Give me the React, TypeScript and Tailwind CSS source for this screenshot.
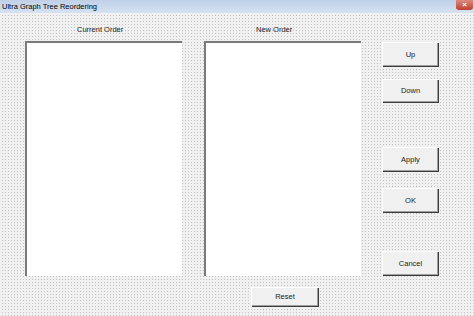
import React from "react";

const font = "font-['Liberation_Sans','Arial',sans-serif]";

function Btn({ label, className = "" }: { label: string; className?: string }) {
  return (
    <div
      className={`flex items-center justify-center bg-[#f0f0f0] text-[7.5px] leading-[10px] text-[#222] shadow-[inset_1px_1px_#ffffff,inset_-1px_-1px_#3c3c3c,inset_-2px_-2px_#a0a0a0] ${className}`}
    >
      {label}
    </div>
  );
}

function ListBox() {
  return <div className="h-[235px] w-[157px] bg-white border-l-2 border-t-2 border-[#7a7a7a]" />;
}

export default function App() {
  return (
    <div className={`w-[474px] h-[316px] flex flex-col overflow-hidden ${font}`}>
      <div className="h-[13px] flex items-start justify-between bg-gradient-to-b from-[#bfd0e8] to-[#d6e2f1]">
        <span className="pl-[2px] pt-[1px] text-[7.5px] leading-[11px] text-black">Ultra Graph Tree Reordering</span>
        <div className="w-[17px] h-[10px] mr-[1px] rounded-b-[3px] bg-gradient-to-b from-[#d98a80] to-[#c13d30] flex items-center justify-center text-white text-[8px] leading-[8px] font-bold">
          ×
        </div>
      </div>
      <div className="flex-1 flex flex-col bg-[#f0f0f0] bg-[linear-gradient(90deg,#f0f0f0_2px,transparent_2px),linear-gradient(#f0f0f0_2px,#c2c2c2_2px)] bg-[length:3px_3px]">
        <div className="flex items-start pl-[25px] pt-[12px]">
          <div className="flex flex-col w-[157px]">
            <div className="h-[10px] ml-[52px] text-[7.5px] leading-[10px] text-[#222]">Current Order</div>
            <div className="mt-[6px]">
              <ListBox />
            </div>
          </div>
          <div className="flex flex-col w-[157px] ml-[22px]">
            <div className="h-[10px] ml-[52px] text-[7.5px] leading-[10px] text-[#222]">New Order</div>
            <div className="mt-[6px]">
              <ListBox />
            </div>
          </div>
          <div className="flex flex-col w-[57px] ml-[21px] pt-[17px]">
            <Btn label="Up" className="h-[25px]" />
            <Btn label="Down" className="h-[24px] mt-[12px]" />
            <Btn label="Apply" className="h-[25px] mt-[44px]" />
            <Btn label="OK" className="h-[25px] mt-[16px]" />
            <Btn label="Cancel" className="h-[25px] mt-[38px]" />
          </div>
        </div>
        <div className="pl-[251px] mt-[11px]">
          <Btn label="Reset" className="w-[68px] h-[20px]" />
        </div>
      </div>
    </div>
  );
}
